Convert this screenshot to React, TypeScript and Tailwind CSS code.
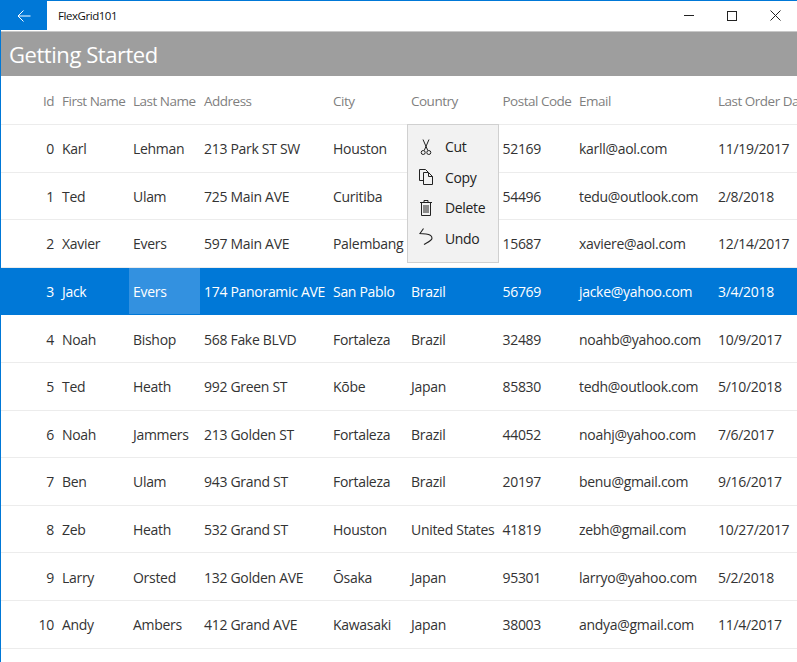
import React from 'react';

const rows = [
  ['0', 'Karl', 'Lehman', '213 Park ST SW', 'Houston', 'United States', '52169', 'karll@aol.com', '11/19/2017'],
  ['1', 'Ted', 'Ulam', '725 Main AVE', 'Curitiba', 'Brazil', '54496', 'tedu@outlook.com', '2/8/2018'],
  ['2', 'Xavier', 'Evers', '597 Main AVE', 'Palembang', 'Indonesia', '15687', 'xaviere@aol.com', '12/14/2017'],
  ['3', 'Jack', 'Evers', '174 Panoramic AVE', 'San Pablo', 'Brazil', '56769', 'jacke@yahoo.com', '3/4/2018'],
  ['4', 'Noah', 'Bishop', '568 Fake BLVD', 'Fortaleza', 'Brazil', '32489', 'noahb@yahoo.com', '10/9/2017'],
  ['5', 'Ted', 'Heath', '992 Green ST', 'Kōbe', 'Japan', '85830', 'tedh@outlook.com', '5/10/2018'],
  ['6', 'Noah', 'Jammers', '213 Golden ST', 'Fortaleza', 'Brazil', '44052', 'noahj@yahoo.com', '7/6/2017'],
  ['7', 'Ben', 'Ulam', '943 Grand ST', 'Fortaleza', 'Brazil', '20197', 'benu@gmail.com', '9/16/2017'],
  ['8', 'Zeb', 'Heath', '532 Grand ST', 'Houston', 'United States', '41819', 'zebh@gmail.com', '10/27/2017'],
  ['9', 'Larry', 'Orsted', '132 Golden AVE', 'Ōsaka', 'Japan', '95301', 'larryo@yahoo.com', '5/2/2018'],
  ['10', 'Andy', 'Ambers', '412 Grand AVE', 'Kawasaki', 'Japan', '38003', 'andya@gmail.com', '11/4/2017'],
];

const headers = ['Id', 'First Name', 'Last Name', 'Address', 'City', 'Country', 'Postal Code', 'Email', 'Last Order Date'];

const gridCols = 'grid grid-cols-[57px_71px_71px_129px_78px_91.5px_76.5px_139px_90px]';
const cellText = 'overflow-hidden whitespace-nowrap pl-1';

function CutIcon() {
  return (
    <svg width="16" height="16" viewBox="0 0 16 16" fill="none" stroke="#222" strokeWidth="1">
      <path d="M5 0.5 L9.8 11.5 M11 0.5 L6.2 11.5" />
      <circle cx="5.2" cy="13.5" r="2" />
      <circle cx="10.8" cy="13.5" r="2" />
    </svg>
  );
}

function CopyIcon() {
  return (
    <svg width="16" height="16" viewBox="0 0 16 16" fill="none" stroke="#222" strokeWidth="1">
      <path d="M5 11.5 H1.5 V0.5 H7.5 L10 3" />
      <path d="M5.5 3.5 H10.5 L14.5 7.5 V15.5 H5.5 Z M10.5 3.5 V7.5 H14.5" />
    </svg>
  );
}

function DeleteIcon() {
  return (
    <svg width="16" height="16" viewBox="0 0 16 16" fill="none" stroke="#222" strokeWidth="1">
      <path d="M2 2.5 H14 M6 2.5 V0.5 H10 V2.5 M3.5 2.5 V15.5 H12.5 V2.5" />
      <path d="M6 5 V13 M8 5 V13 M10 5 V13" />
    </svg>
  );
}

function UndoIcon() {
  return (
    <svg width="16" height="17" viewBox="0 0 16 17" fill="none" stroke="#222" strokeWidth="1.1" className="-mt-[3px]">
      <path d="M5.5 0.5 L2 5.5 L8 6 C12 6.5 14 8.2 14 10.3 C14 12.5 10 14.2 6 16.5" />
    </svg>
  );
}

const menuItems = [
  { label: 'Cut', icon: <CutIcon /> },
  { label: 'Copy', icon: <CopyIcon /> },
  { label: 'Delete', icon: <DeleteIcon /> },
  { label: 'Undo', icon: <UndoIcon /> },
];

export default function App() {
  return (
    <div className="relative h-[662px] w-[797px] overflow-hidden border-l border-t border-[#0078d7] bg-white font-['Open_Sans',sans-serif] text-[#333]">
      {/* Title bar */}
      <div className="flex h-[30px] items-center pb-px">
        <div className="flex h-[29px] w-[46px] items-center justify-center bg-[#0078d7]">
          <svg width="14" height="14" viewBox="0 0 14 14" fill="none" stroke="#fff" strokeWidth="1">
            <path d="M1 7 H13.5 M6.5 1.5 L1 7 L6.5 12.5" />
          </svg>
        </div>
        <span className="ml-[11px] text-[11.5px] tracking-[-0.45px] text-[#111]">FlexGrid101</span>
        <div className="ml-auto flex h-full items-center">
          <div className="flex h-full w-[43px] items-center justify-center">
            <div className="h-px w-[10px] bg-[#222]" />
          </div>
          <div className="flex h-full w-[43px] items-center justify-center">
            <div className="size-[10px] border border-[#222]" />
          </div>
          <div className="flex h-full w-[44px] items-center justify-center">
            <svg width="11" height="11" viewBox="0 0 11 11" fill="none" stroke="#222" strokeWidth="1">
              <path d="M0.5 0.5 L10.5 10.5 M10.5 0.5 L0.5 10.5" />
            </svg>
          </div>
        </div>
      </div>

      {/* Page header */}
      <div className="flex h-[45px] items-center border-t border-[#c8c8c8] bg-[#9e9e9e] pl-2 pt-px">
        <h1 className="text-[22px] tracking-[-0.45px] text-white">Getting Started</h1>
      </div>

      {/* Column headers */}
      <div className={`${gridCols} h-[49px] items-center border-b border-[#ececec] pt-[2px] text-[13.5px] tracking-[-0.5px] text-[#7f7f7f]`}>
        {headers.map((h, i) => (
          <div key={h} className={`${cellText} ${i === 0 ? 'pr-1 text-right' : ''}`}>
            {h}
          </div>
        ))}
      </div>

      {/* Rows */}
      {rows.map((row) => {
        const selected = row[0] === '3';
        return (
          <div
            key={row[0]}
            className={`${gridCols} h-[47.6px] border-b text-[14px] tracking-[-0.3px] ${selected ? 'border-[#0078d7] bg-[#0078d7] text-white' : 'border-[#ececec]'}`}
          >
            {row.map((value, i) => (
              <div
                key={i}
                className={`${cellText} flex items-center pt-px ${i === 0 ? 'justify-end pr-1' : ''} ${selected && i === 2 ? 'bg-[#3391e0]' : ''}`}
              >
                {value}
              </div>
            ))}
          </div>
        );
      })}

      {/* Context menu */}
      <div className="absolute left-[406px] top-[123px] flex h-[139px] w-[92px] flex-col justify-center border border-[#d0d0d0] bg-[#f2f2f2] pb-[2px]">
        {menuItems.map((item) => (
          <div key={item.label} className="flex h-[30.5px] items-center pl-[10px]">
            {item.icon}
            <span className="ml-[11px] text-[14px] tracking-[-0.35px] text-[#222]">{item.label}</span>
          </div>
        ))}
      </div>
    </div>
  );
}
